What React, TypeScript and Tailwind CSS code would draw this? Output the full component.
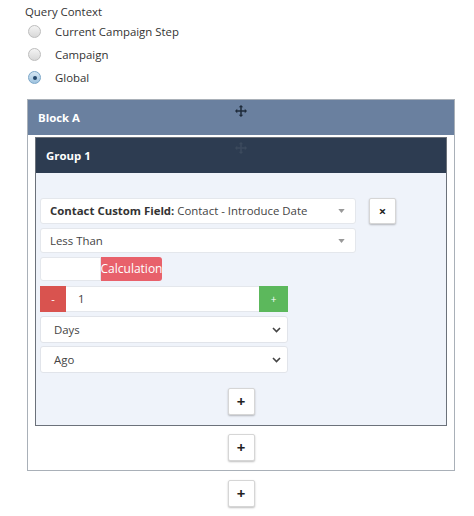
import React from "react";

const Move = ({ className }: { className?: string }) => (
  <svg viewBox="0 0 16 16" width="12" height="12" className={className} fill="currentColor">
    <path d="M8 0 L11 3 H9 V7 H13 V5 L16 8 L13 11 V9 H9 V13 H11 L8 16 L5 13 H7 V9 H3 V11 L0 8 L3 5 V7 H7 V3 H5 Z" />
  </svg>
);

const Caret = () => (
  <svg width="7" height="4" viewBox="0 0 8 5" className="text-[#999]" fill="currentColor">
    <path d="M0 0 H8 L4 5 Z" />
  </svg>
);

const Chevron = () => (
  <svg width="9" height="6" viewBox="0 0 9 6" fill="none" stroke="#444" strokeWidth="1.6">
    <path d="M1 1 L4.5 4.5 L8 1" />
  </svg>
);

const Radio = ({ checked, label }: { checked?: boolean; label: string }) => (
  <div className="flex items-center h-[23px]">
    <span
      className={`w-[13px] h-[13px] rounded-full border flex items-center justify-center ml-[3px] ${
        checked
          ? "border-[#7aa6c8] bg-gradient-to-b from-[#d5e6f3] to-[#9fc3df]"
          : "border-[#bdbdbd] bg-gradient-to-b from-[#f4f4f4] to-[#d8d8d8]"
      }`}
    >
      {checked && <span className="w-[4px] h-[4px] rounded-full bg-[#24476b]" />}
    </span>
    <span className="ml-[14px] text-[#333]">{label}</span>
  </div>
);

const PlusBtn = () => (
  <button className="w-[27px] h-[27px] bg-white border border-[#d6d6d6] rounded-[2px] shadow-[0_1px_2px_rgba(0,0,0,0.25)] flex items-center justify-center text-[#222] text-[15px] font-bold leading-none">
    +
  </button>
);

export default function App() {
  return (
    <div
      className="w-[474px] h-[516px] bg-white text-[11.4px] text-[#444] overflow-hidden"
      style={{ fontFamily: '"Open Sans", "Noto Sans", sans-serif' }}
    >
      <div className="pl-[25px] pt-[3px]">
        <div className="h-[17px] leading-[17px] text-[#333]">Query Context</div>
        <div>
          <Radio label="Current Campaign Step" />
          <Radio label="Campaign" />
          <Radio checked label="Global" />
        </div>
      </div>

      <div className="ml-[27px] w-[428px] mt-[10px]">
        {/* Block A */}
        <div className="border border-[#a9b0b8]">
          <div className="relative h-[35px] bg-[#6a809f] flex items-center pl-[10px]">
            <span className="text-white font-bold">Block A</span>
            <Move className="absolute left-[207px] top-[5px] text-[#1e2a3a]" />
          </div>
          <div className="px-[7px] pt-[2px]">
            <div className="border border-[#6b717a]">
              <div className="relative h-[35px] bg-[#2d3c51] flex items-center pl-[10px]">
                <span className="text-white font-bold">Group 1</span>
                <Move className="absolute left-[199px] top-[4px] text-[#3c4a5d]" />
              </div>
              <div className="bg-[#eff3fa] pl-[4px] pt-[25px] pb-[10px]">
                <div className="flex items-start">
                  <div className="w-[316px] h-[26px] bg-white rounded-[3px] border border-[#e4e7ec] flex items-center justify-between pl-[9px] pr-[10px]">
                    <span className="text-[#444] whitespace-nowrap">
                      <b className="text-[#333]">Contact Custom Field:</b> Contact - Introduce Date
                    </span>
                    <Caret />
                  </div>
                  <button className="ml-[13px] w-[27px] h-[26px] bg-white border border-[#d6d6d6] rounded-[2px] shadow-[0_1px_2px_rgba(0,0,0,0.25)] flex items-center justify-center text-[#222] text-[13px] font-bold leading-none">
                    ×
                  </button>
                </div>
                <div className="mt-[4px] w-[316px] h-[25px] bg-white rounded-[3px] border border-[#e4e7ec] flex items-center justify-between pl-[9px] pr-[10px]">
                  <span>Less Than</span>
                  <Caret />
                </div>
                <div className="mt-[4px] flex h-[24px]">
                  <div className="w-[61px] bg-white border border-[#e4e7ec] rounded-l-[3px]" />
                  <div className="w-[61px] bg-[#e8616b] rounded-r-[3px] text-white flex items-center justify-center text-[12px]">
                    Calculation
                  </div>
                </div>
                <div className="mt-[5px] flex h-[26px] w-[248px]">
                  <div className="w-[26px] bg-[#d9534f] text-white flex items-center justify-center text-[11px]">-</div>
                  <div className="flex-1 bg-white border-y border-[#e4e7ec] flex items-center pl-[12px] text-[#444]">1</div>
                  <div className="w-[29px] bg-[#5cb85c] text-white flex items-center justify-center text-[10px]">+</div>
                </div>
                <div className="mt-[4px] w-[248px] h-[27px] bg-white rounded-[3px] border border-[#e1e4ea] flex items-center justify-between pl-[13px] pr-[6px]">
                  <span>Days</span>
                  <Chevron />
                </div>
                <div className="mt-[3px] w-[248px] h-[27px] bg-white rounded-[3px] border border-[#e1e4ea] flex items-center justify-between pl-[13px] pr-[6px]">
                  <span>Ago</span>
                  <Chevron />
                </div>
                <div className="mt-[15px] flex justify-center pr-[4px]">
                  <PlusBtn />
                </div>
              </div>
            </div>
          </div>
          <div className="flex justify-center pt-[8px] pb-[9px]">
            <PlusBtn />
          </div>
        </div>
        <div className="flex justify-center pt-[9px]">
          <PlusBtn />
        </div>
      </div>
    </div>
  );
}
